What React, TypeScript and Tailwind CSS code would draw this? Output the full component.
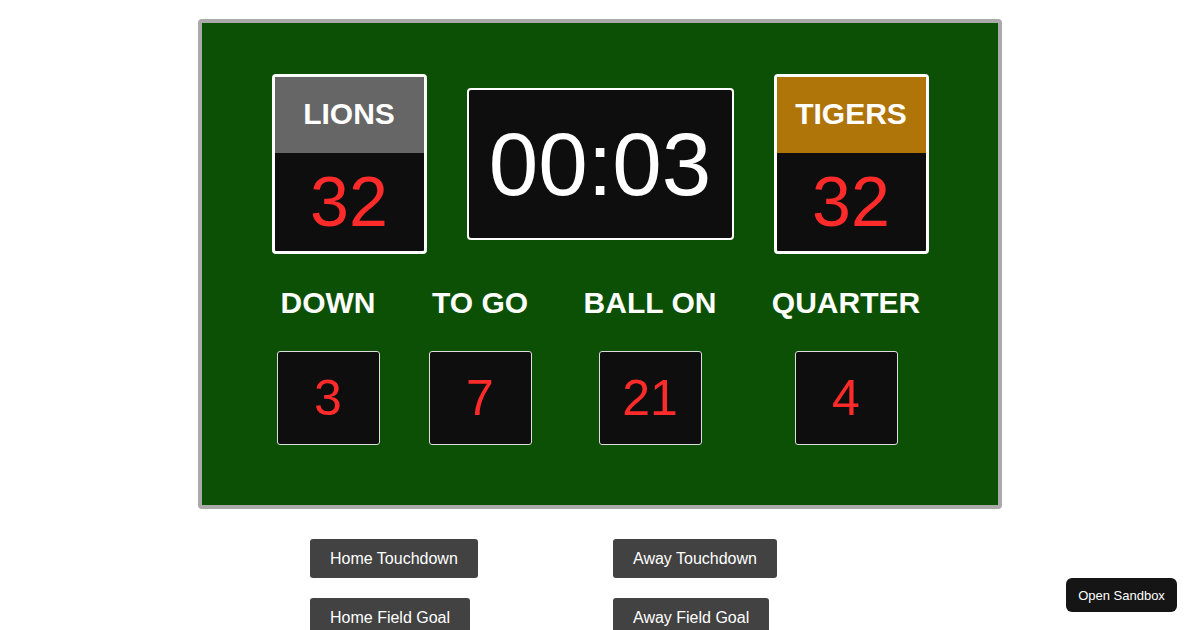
import React from 'react';

const font = { fontFamily: '"Liberation Sans", Arial, Helvetica, sans-serif' };

interface TeamProps {
  name: string;
  score: number;
  headerClass: string;
}

const TeamBox: React.FC<TeamProps> = ({ name, score, headerClass }) => (
  <div className="w-[155px] h-[180px] border-[3px] border-white rounded-[4px] overflow-hidden flex flex-col bg-[#0e0e0e]">
    <div className={`h-[76px] flex items-center justify-center text-white font-bold text-[30px] leading-none pb-[2px] ${headerClass}`}>
      {name}
    </div>
    <div className="flex-1 flex items-center justify-center text-[#ff2b2b] text-[70px] leading-none">
      {score}
    </div>
  </div>
);

const Stat = ({ label, value, width }: { label: string; value: number; width: string }) => (
  <div className={`flex flex-col items-center ${width}`}>
    <div className="text-white font-bold text-[30px] leading-[36px] whitespace-nowrap">{label}</div>
    <div className="mt-[30px] w-[103px] h-[94px] border border-[#dddddd] rounded-[3px] bg-[#0e0e0e] flex items-center justify-center text-[#ff2b2b] text-[50px] leading-none">
      {value}
    </div>
  </div>
);

const ActionButton = ({ children }: { children: React.ReactNode }) => (
  <button className="h-[39px] px-5 rounded-[3px] bg-[#424242] text-white text-[16px] leading-none">
    {children}
  </button>
);

export default function App() {
  return (
    <div className="min-h-screen bg-white pb-10" style={font}>
      <div className="pt-[19px]">
        <div className="mx-auto w-[804px] border-4 border-[#aaaaaa] rounded-[4px] bg-[#0b5004] pt-[51px] pb-[60px]">
          {/* Scores and clock */}
          <div className="flex items-center justify-center gap-10">
            <TeamBox name="LIONS" score={32} headerClass="bg-[#666666]" />
            <div className="w-[267px] h-[152px] border-2 border-white rounded-[4px] bg-[#0e0e0e] flex items-center justify-center text-white text-[89px] leading-none">
              00:03
            </div>
            <TeamBox name="TIGERS" score={32} headerClass="bg-[#b07509]" />
          </div>

          {/* Game state */}
          <div className="mt-[31px] flex justify-center">
            <Stat label="DOWN" value={3} width="w-[152px]" />
            <Stat label="TO GO" value={7} width="w-[152px]" />
            <Stat label="BALL ON" value={21} width="w-[188px]" />
            <Stat label="QUARTER" value={4} width="w-[204px]" />
          </div>
        </div>
      </div>

      <div className="mx-auto w-[580px] mt-[30px] grid grid-cols-[303px_1fr] gap-y-5 justify-items-start">
        <ActionButton>Home Touchdown</ActionButton>
        <ActionButton>Away Touchdown</ActionButton>
        <ActionButton>Home Field Goal</ActionButton>
        <ActionButton>Away Field Goal</ActionButton>
      </div>

      <button className="fixed right-[23px] bottom-[18px] w-[111px] h-[34px] rounded-md bg-[#151515] text-white text-[13px] leading-none">
        Open Sandbox
      </button>
    </div>
  );
}
